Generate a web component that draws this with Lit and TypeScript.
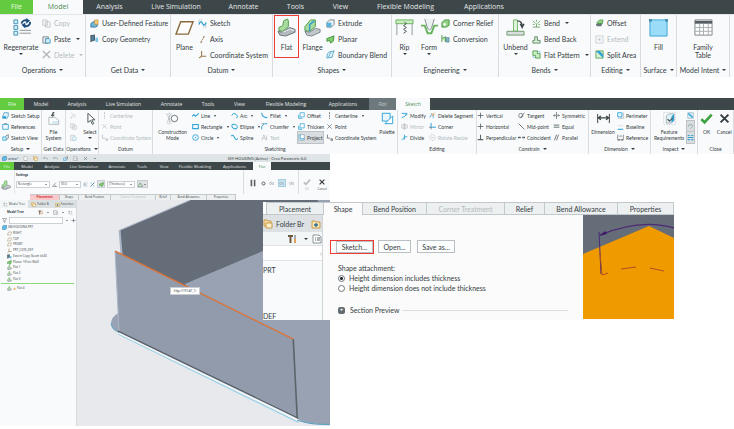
import { LitElement, html, svg, css, nothing, TemplateResult, SVGTemplateResult } from "lit";
import { customElement } from "lit/decorators.js";
import { classMap } from "lit/directives/class-map.js";

/* Small glyphs are drawn on a 10x10 grid, large ones on a 20x20 grid. */
const G = "#5b6468";
const B = "#2fa3d6";
const N = "#67b45a";
const flatPiece = svg`
  <path d="M2 10 L6 8 L7 3 L11 1 L12 3 L12 9 L6 14 L2 13Z" fill="#a9dba0" stroke="#4f9f48"/>
  <path d="M1 14 L6 15 L13 10 L19 12 L19 15 L9 19 L3 18Z" fill="#b4bbbe" stroke="#697276"/>
  <path d="M6 15 L13 12 L18 13" fill="none" stroke="#eef1f2"/>`;
const icons: Record<string, SVGTemplateResult> = {
  regenerate: svg`<g fill="#d9f0fa" stroke="#3f8fb5"><path d="M2 2h4v4h-4zM2 8h4v4h-4zM2 14h4v4h-4z"/></g><path d="M10 6a4 4 0 0 1 6-3M19 4a4 4 0 0 1-6 4" fill="none" stroke="#1f4f7c" stroke-width="2"/><path d="M15 0l4 3-4 3zM14 5l-4 2 4 4z" fill="#1f4f7c"/><path d="M8 13h12M8 16h12" stroke="#8d969a"/>`,
  plane: svg`<path d="M6 4H19L14 17H1Z" fill="#fff" stroke="#8a6a3c" stroke-width="1.5"/>`,
  flat: flatPiece,
  flange: svg`<path d="M2 9 L8 2 L13 2 L13 9 L7 14 L2 13Z" fill="#a9dba0" stroke="#4f9f48"/><path d="M7 14V7L12 3" fill="none" stroke="#2f9fd0" stroke-width="1.5"/><path d="M2 14 L7 15 L13 11 L18 12 L18 15 L9 19 L4 18Z" fill="#c3c9cb" stroke="#7a8387"/>`,
  rip: svg`<path d="M1 2H19V6H1Z" fill="#c9ecc2" stroke="${N}"/><path d="M2 6V18M18 6V18" stroke="#8e979a"/><path d="M10 4l2 2-3 2 3 2-3 2 3 2-3 2" fill="none" stroke="#49545a"/>`,
  form: svg`<path d="M1 8H5L8 16H12L15 8H19" fill="none" stroke="${N}" stroke-width="2"/><path d="M5 1L8 11Q10 14 12 11L15 1" fill="#eef1f2" stroke="#848d91"/>`,
  unbend: svg`<path d="M8 2H12V14H8Z" fill="#e8f6e4" stroke="${N}"/><path d="M1 14H19V18H1Z" fill="#d9dedf" stroke="#6f9a6b"/><path d="M12 3Q17 3 17 9M15 6l2 4 2-4" fill="none" stroke="#3b4448" stroke-width="1.5"/>`,
  fill: svg`<path d="M1 2H19V19H1Z" fill="#9bdcf8" stroke="#3aa4d0"/><path d="M0 1h3v3h-3zM17 1h3v3h-3z" fill="#4b8fb0"/>`,
  table: svg`<path d="M1 2H19V18H1Z" fill="#fff" stroke="#7c8589"/><path d="M1 3H19V6H1Z" fill="#555e62"/><path d="M1 10H19M1 14H19M6 6V18M10 6V18M15 6V18" stroke="#a7aeb1"/>`,
  filesys: svg`<path d="M3 8H12L18 13V19H3Z" fill="#fff" stroke="#8f989b"/><path d="M9 0L6 6h3l-3 5 6-7h-3l3-4z" fill="#4a5459"/><path d="M8 14h9v4h-9z" fill="#cfe8f4"/>`,
  select: svg`<path d="M6 2V16L10 13L13 19L15 18L12 12H17Z" fill="#fff" stroke="#50595d" stroke-width="1.5"/>`,
  construct: svg`<circle cx="13" cy="10" r="5" fill="none" stroke="#6c7579" stroke-width="1.5"/><path d="M1 2L8 18M8 2L1 18M5 1V19" stroke="#9aa2a5" stroke-dasharray="3 1"/>`,
  palette: svg`<path d="M2 2H14V14H2Z" fill="#e9f7fd" stroke="${B}" stroke-width="1.5"/><path d="M18 6V18H6Z" fill="#fff" stroke="${B}" stroke-width="1.5"/>`,
  dimension: svg`<path d="M1 3V17M19 3V17" stroke="#3d4649" stroke-width="1.5"/><path d="M2 9H18M6 6L2 9l4 3M14 6l4 3-4 3" fill="none" stroke="#3d4649" stroke-width="2"/>`,
  feature: svg`<path d="M5 6L9 3H17V13L13 17H5Z" fill="#dff2fa" stroke="#8e979b"/><path d="M13 7L17 3V13L13 17Z" fill="#2fa3d6"/><path d="M1 1H19V19H1Z" fill="none" stroke="#b3babd" stroke-dasharray="2 2"/><path d="M7 11l3 3 5-5" fill="none" stroke="#4e585c" stroke-width="2"/>`,
  ok: svg`<path d="M2 11L7 16L18 4" fill="none" stroke="#3aa23f" stroke-width="4"/>`,
  okGrey: svg`<path d="M2 11L7 16L18 4" fill="none" stroke="#5d6668" stroke-width="4"/>`,
  cancel: svg`<path d="M4 4L16 16M16 4L4 16" stroke="#363e42" stroke-width="3"/>`,

  copy: svg`<path d="M1 1h4l1 1v5h-5zM4 3h4l1 1v5h-5z" fill="#f3f4f5" stroke="#6f787c"/>`,
  paste: svg`<path d="M1 2h6v7h-6z" fill="#e9edef" stroke="#7d868a"/><path d="M4 4h4l1 1v4h-5z" fill="#d3effb" stroke="#3e8fb4"/>`,
  del: svg`<path d="M1 1L9 9M9 1L1 9" stroke="#4a5458" stroke-width="1.5"/>`,
  udf: svg`<path d="M1 5L4 3H8V8L6 9H1Z" fill="#6db7dd" stroke="#39759a"/><path d="M5 1h4v5h-4z" fill="#f1c879" stroke="#b98b38" stroke-width=".6"/>`,
  geom: svg`<path d="M1 1V9M1 2L5 1V7L1 8" fill="#4e7d9b" stroke="#48545a"/><path d="M6 4h3v5h-3z" fill="#7ec7e6"/>`,
  sketch: svg`<path d="M1 1h3v3h-3zM6 6h3v3h-3z" fill="none" stroke="#a3abae" stroke-dasharray="1 1"/><path d="M1 6Q3 1 5 5T9 4" fill="none" stroke="${B}" stroke-width="1.5"/>`,
  axis: svg`<path d="M7 1L3 9" stroke="#9a7a48" stroke-width="1.2" stroke-dasharray="3 1 1 1"/>`,
  csys: svg`<path d="M4 1V7H9M4 7L1 9" fill="none" stroke="#9a7a48" stroke-width="1.2"/>`,
  csysG: svg`<path d="M2 1V6H6M7 7h3v2h-3z" fill="none" stroke="#4e585c"/>`,
  extrude: svg`<path d="M1 4L4 1H9V6L6 9H1Z" fill="#eef7fb" stroke="#6f7a7f"/><path d="M1 4H6V9H1Z" fill="#58b4dd"/>`,
  planar: svg`<path d="M1 4L9 1L8 7L5 9L4 6L1 7Z" fill="#7fd06e" stroke="#3f8d3a"/>`,
  blend: svg`<path d="M1 9Q1 3 4 2L9 1Q7 5 7 8Z" fill="#e4f4fb" stroke="#56a4c6"/><path d="M3 8Q4 4 6 2" fill="none" stroke="#56a4c6"/>`,
  relief: svg`<path d="M1 4L4 1H9V7L6 9H1Z" fill="#8fd383" stroke="#498f43"/><circle cx="4" cy="6" r="1.5" fill="#fff"/>`,
  convert: svg`<path d="M1 1V9M1 5L5 3V9" fill="#b6e2ae" stroke="#4d9a47"/><path d="M6 4h3v5h-3z" fill="#7ab6d2" stroke="#56707c" stroke-width=".6"/>`,
  bend: svg`<path d="M1 9H9M5 9V5M1 2L4 5M9 2L6 5M5 1V3M1 6H3M7 6H9" stroke="#6aa764" fill="none"/>`,
  bendback: svg`<path d="M1 9H9V6H6V2H3V6H1Z" fill="#d5ecd0" stroke="#60866a"/>`,
  pattern: svg`<path d="M1 1H6V4H9V9H4V6H1Z" fill="#c9ecc2" stroke="#54a04e"/><path d="M7 1l2 2M1 7l2 2" stroke="${B}"/>`,
  offset: svg`<path d="M1 6L4 3H9L7 8H2Z" fill="#69737a"/><path d="M2 4L5 1H9L8 5H3Z" fill="#8fd383" stroke="#3f8d3a" stroke-width=".7"/>`,
  extend: svg`<path d="M1 1H9V9H1Z" fill="#f3f4f5" stroke="#8c9599"/><path d="M3 5L6 3V7Z" fill="#7b8488"/>`,
  split: svg`<path d="M1 1H9V9H1Z" fill="#d7f0d1" stroke="#62a35c"/><path d="M1 1L9 9V5L5 1Z" fill="${B}"/>`,

  sheet: svg`<path d="M3 1H9V6L7 9H1V6Z" fill="#dff1f9" stroke="#3e93bb"/><path d="M1 6H6V9H1Z" fill="${B}"/>`,
  refs: svg`<path d="M1 2H9V9H1Z" fill="none" stroke="${B}" stroke-width="1.2"/><path d="M3 1H7" stroke="${G}"/>`,
  view: svg`<path d="M1 4H6V9H1Z" fill="#cbeaf7" stroke="${B}"/><path d="M5 3L9 1V6L6 8" fill="none" stroke="${G}"/>`,
  cut: svg`<path d="M2 1L8 8M8 3L2 7" stroke="#888f93"/><circle cx="2" cy="8" r="1" fill="none" stroke="#888f93"/>`,
  dotline: svg`<path d="M5 0V10" stroke="${G}" stroke-dasharray="3 1"/>`,
  cross: svg`<path d="M2 2L8 8M8 2L2 8" stroke="${G}"/>`,
  line: svg`<path d="M0 6L3 4L5 6L10 2" fill="none" stroke="${B}" stroke-width="1.5"/>`,
  rect: svg`<path d="M1 2H9V8H1Z" fill="#f3fbff" stroke="${B}" stroke-width="1.5"/>`,
  circle: svg`<circle cx="5" cy="5" r="4" fill="none" stroke="${B}" stroke-width="1.3"/><circle cx="5" cy="5" r="1" fill="${B}"/>`,
  dot: svg`<circle cx="5" cy="5" r="3" fill="none" stroke="${G}" stroke-width="2"/>`,
  arc: svg`<path d="M1 5Q3 0 7 3T8 9" fill="none" stroke="${B}" stroke-width="1.4"/>`,
  ellipse: svg`<ellipse cx="5" cy="5" rx="4" ry="3" fill="none" stroke="${B}" stroke-width="1.3" transform="rotate(30 5 5)"/>`,
  spline: svg`<path d="M0 3Q3 0 5 5T10 6" fill="none" stroke="${B}" stroke-width="1.5"/>`,
  fillet: svg`<path d="M1 1Q1 8 9 8" fill="none" stroke="${B}" stroke-width="1.5"/>`,
  chamfer: svg`<path d="M1 9V5L5 1H9" fill="none" stroke="${B}" stroke-width="1.4"/><path d="M1 1h3" stroke="${G}"/>`,
  text: svg`<path d="M1 9L4 1L7 9M2 6H6M8 2V9" fill="none" stroke="${G}"/>`,
  offs: svg`<path d="M3 1H9V7H3Z" fill="none" stroke="${B}"/><path d="M1 4V9H6" fill="none" stroke="${B}" stroke-width="1.3"/>`,
  project: svg`<path d="M1 1H9V9H1Z" fill="#fff" stroke="#8ea5b1"/><path d="M3 1V7H9" fill="none" stroke="${B}" stroke-width="1.4"/>`,
  modify: svg`<path d="M1 2H9M6 4H9M1 8Q5 8 8 3" fill="none" stroke="${B}" stroke-width="1.3"/>`,
  mirror: svg`<path d="M5 0V10M1 3L4 2V8L1 7ZM9 3L6 2V8L9 7Z" fill="none" stroke="${G}"/>`,
  divide: svg`<path d="M1 8Q4 8 5 4H9M5 1V8" fill="none" stroke="${B}" stroke-width="1.2"/>`,
  delseg: svg`<path d="M1 8L4 2M6 9V5" stroke="${B}"/><path d="M3 2L8 5M8 1L4 6" stroke="#d38a35"/>`,
  corner: svg`<path d="M3 0V6H10" fill="none" stroke="${B}" stroke-width="1.4"/><path d="M0 6H3V9" fill="none" stroke="${G}"/>`,
  rotate: svg`<circle cx="5" cy="5" r="4" fill="none" stroke="${G}" stroke-dasharray="3 1"/><path d="M3 5H7" stroke="${G}"/>`,
  plus: svg`<path d="M5 1V9M1 5H9" stroke="${G}" stroke-width="1.2"/>`,
  perp: svg`<path d="M5 1V8M1 8H9" stroke="${G}" stroke-width="1.5"/>`,
  tangent: svg`<circle cx="4" cy="5" r="3" fill="none" stroke="${G}"/><path d="M3 9L9 1" stroke="${G}"/>`,
  mid: svg`<path d="M1 1L9 9" stroke="${G}" stroke-width="1.2"/>`,
  coin: svg`<path d="M0 5H4M6 5H10" stroke="${G}" stroke-width="1.8"/>`,
  symm: svg`<path d="M5 0V10M0 5H3M7 5H10M2 3L4 5L2 7M8 3L6 5L8 7" fill="none" stroke="${G}"/>`,
  equal: svg`<path d="M1 3H9M1 6H9" stroke="${G}" stroke-width="1.3"/>`,
  parallel: svg`<path d="M2 9L5 1M5 9L8 1" stroke="${G}" stroke-width="1.2"/>`,
  perim: svg`<path d="M1 1H7V7H1Z" fill="#e4f6fd" stroke="${B}" stroke-width="1.2"/><path d="M9 1V9H1" fill="none" stroke="${G}" stroke-dasharray="1 1"/>`,
  base: svg`<path d="M1 9H9" stroke="${B}" stroke-width="1.5"/><path d="M1 4H9" stroke="#d5dadc"/>`,
  refdim: svg`<path d="M1 1V8H9V1M3 3H7M1 9H4M6 9H9" fill="none" stroke="${G}"/>`,
  inspA: svg`<path d="M1 1H9V9H1Z" fill="#d9eef7" stroke="#9fb5bf"/><path d="M2 2L8 8" stroke="${B}" stroke-width="2"/>`,
  inspB: svg`<path d="M2 5Q2 2 5 2T8 5L5 8" fill="none" stroke="#7d96a3"/>`,
  inspC: svg`<path d="M1 2H4M6 2H9M1 5H9M1 8H4M6 8H9" stroke="${B}" stroke-width="1.5"/>`,

  logo: svg`<path d="M1 3L3 1H9V7L7 9H1Z" fill="#5fbbe4" stroke="#2a7fae"/>`,
  datum: svg`<path d="M3 2H9L7 8H1Z" fill="#fff" stroke="#a38a62"/>`,
  angle: svg`<path d="M1 9H10M1 9L8 1M5 5Q7 6 7 9" fill="none" stroke="${G}"/>`,
  bracket: svg`<path d="M9 2H2V8H9M2 5H7" fill="none" stroke="#7e9aa8"/>`,
  slash: svg`<path d="M1 9L9 1" stroke="#37678a" stroke-width="1.5"/><path d="M1 2h3M6 8h3" stroke="${B}"/>`,
  funnel: svg`<path d="M1 1H9L6 5V9L4 8V5Z" fill="#fff" stroke="${G}"/>`,
  folder: svg`<path d="M1 1H4L5 2H8V7H1Z" fill="#f8dfa5" stroke="#c79b49"/><path d="M3 4H9V9H3Z" fill="#fdf0cc" stroke="#c79b49"/>`,
  favorite: svg`<path d="M1 2H4L5 3H9V9H1Z" fill="#fbe7b4" stroke="#c79b49"/><path d="M5 4V8M3 6H7" stroke="#2b6b99" stroke-width="1.3"/>`,
  tools: svg`<path d="M1 1H6V3H4.500V9H2.500V3H1Z" fill="#6f5a44"/><path d="M8 1V5" stroke="${G}"/><path d="M8 5V9" stroke="#e08a2b" stroke-width="1.6"/>`,
  list: svg`<path d="M1 1H7L9 3V9H1Z" fill="#fff" stroke="#8b9498"/><path d="M3 4H4M5 4H8M3 6H4M5 6H8" stroke="${G}"/>`,
  tree: svg`<path d="M2 1V8M2 3H5M2 8H5M7 2V5M6 8H9" stroke="#879094" fill="none"/>`,
  pause: svg`<path d="M2 1H4V9H2ZM6 1H8V9H6Z" fill="#5a6266"/>`,
  glasses: svg`<circle cx="3" cy="5" r="2" fill="none" stroke="#8c9599"/><circle cx="8" cy="5" r="2" fill="none" stroke="#8c9599"/><path d="M3 3L5 1" stroke="#8c9599"/>`,
  newdoc: svg`<path d="M2 1H6L8 3V9H2Z" fill="#fff" stroke="#8f989b"/>`,
  undo: svg`<path d="M1 4H7Q9 4 9 7M3 2L1 4L3 6" fill="none" stroke="#7d868a"/>`,
  partial: svg`<g transform="scale(.5)">${flatPiece}</g>`,
  partialWarn: svg`<path d="M5 1L9 8H1Z" fill="#ee9a22"/>`,
};
const BIG = new Set(["regenerate", "plane", "flat", "flange", "rip", "form", "unbend", "fill", "table", "filesys", "select", "construct", "palette", "dimension", "feature", "ok", "okGrey", "cancel"]);
const icon = (name: string, cls = "") =>
  html`<svg class="ico ${cls}" viewBox=${BIG.has(name) ? "0 0 20 20" : "0 0 10 10"} aria-hidden="true">${icons[name]}</svg>`;
const caret = html`<i class="caret"></i>`;

/* "▾" after a label adds the menu arrow, "!" before it greys it out, "#" marks it pressed. */
type Item = [string, string];
const item = ([ic, raw]: Item) => {
  const off = raw.startsWith("!");
  const on = raw.startsWith("#");
  const menu = raw.endsWith("▾");
  const text = raw.replace(/^[!#]|▾$/g, "");
  return html`<button class=${classMap({ item: true, off, on })} ?disabled=${off} aria-label=${text || ic}>
    ${icon(ic)}${text ? html`<span>${text}</span>` : nothing}${menu ? caret : nothing}</button>`;
};
const col = (...items: Item[]) => html`<div class="col">${items.map(item)}</div>`;
const big = (ic: string, lines: string[], menu = false, marked = false) => html`
  <button class=${classMap({ big: true, marked })}>${icon(ic)}
    ${lines.map((l) => html`<span>${l}</span>`)}${menu ? caret : nothing}</button>`;
const group = (cls: string, title: string, body: TemplateResult) => html`
  <section class="group">
    <div class="body ${cls}">${body}</div>
    <div class="title">${title.replace("▾", "")}${title.endsWith("▾") ? caret : nothing}</div>
  </section>`;
const TABS = ["File", "Model", "Analysis", "Live Simulation", "Annotate", "Tools", "View", "Flexible Modeling", "Applications"];
const tabs = (active: string, extra: string[] = []) => html`
  <nav class="tabs">${[...TABS, ...extra].map((t) => html`
    <button class=${classMap({ file: t === "File", active: t === active, context: t === "Flat" && t !== active })}>${t}</button>`)}</nav>`;
const PANES = ["Placement", "Shape", "Bend Position", "Corner Treatment", "Relief", "Bend Allowance", "Properties"];
const panes = (active: string) => html`
  <nav class="panes">${PANES.map((t) => html`
    <button class=${classMap({ active: t === active, off: t === "Corner Treatment" })}>${t}</button>`)}</nav>`;
const TREE: Item[] = [
  ["logo", "SM-HOUSING.PRT"], ["datum", "RIGHT"], ["datum", "TOP"], ["datum", "FRONT"], ["csys", "PRT_CSYS_DEF"],
  ["geom", "Extern Copy Geom id 40"], ["planar", "Planar 1(First Wall)"], ["partial", "Flat 1"], ["partial", "Flat 2"], ["partial", "Flat 3"],
];

@customElement("app-root")
export class AppRoot extends LitElement {
  static styles = css`
    :host { display: block; background: #fff; color: #353d41; font-family: Lato, "Open Sans", sans-serif; overflow: hidden; }
    * { box-sizing: border-box; }
    button, input, select { font: inherit; color: inherit; padding: 0; margin: 0; border: 0; background: none; border-radius: 0; appearance: none; outline: none; min-width: 0; }
    button { white-space: nowrap; }
    svg { display: block; flex: none; }
    .ico { width: var(--ico); height: var(--ico); }
    .caret { flex: none; width: 0; height: 0; border: 2px solid transparent; border-top-color: currentColor; border-bottom: 0; margin-left: 3px; }
    .off { color: #b4babd; }
    .off .ico { opacity: .4; }

    .tabs { display: grid; background: #3d4649; color: #e3e7e8; font-family: "Open Sans", "Noto Sans", sans-serif; }
    .tabs .file { background: #62cb3f; color: #e9fbe3; }
    .tabs .active { background: #f8fafc; color: #4c8a4d; }
    .tabs .context { background: #6d787c; color: #c3cbce; font-style: italic; }
    .groups { display: grid; background: #f8fafc; }
    .group { border-right: 1px solid #d8dcdf; min-width: 0; }
    .body { display: grid; }
    .col { display: grid; grid-auto-rows: var(--row); align-content: start; justify-items: start; }
    .item { display: flex; align-items: center; gap: 2px; }
    .item .caret { margin-left: 2px; }
    .big { display: flex; flex-direction: column; align-items: center; align-self: start; }
    .big .ico { width: var(--bigico); height: var(--bigico); margin-bottom: var(--drop); }
    .big .caret { margin: 2px 0 0; }
    .title { display: flex; align-items: center; justify-content: center; white-space: nowrap; }

    .main { --ico: 9px; --bigico: 19px; --row: 16px; --drop: 6px; font-size: 7px; line-height: 8px; }
    .main .tabs { grid-template-columns: 33px 50px 53px 80px 55px 49px 41px 89px 68px; height: 14px; }
    .main .groups { grid-template-columns: 86fr 85fr 102fr 119fr 107fr 92fr 50fr 36fr 53fr 4fr; border-top: 1px solid #e2e6e8; }
    .main .body { height: 47px; }
    .main .title { height: 15px; }
    .main .big { padding-top: 3px; height: 43px; }
    .main .item { gap: 3px; }
    .main .col .item:last-child { height: 15px; }
    .marked { box-shadow: inset 0 0 0 1px #ee3b36; }
    .m-ops { grid-template-columns: 42px 1fr; }
    .m-data { grid-template-columns: 1fr; padding-left: 4px; }
    .m-datum { grid-template-columns: 27px 1fr; }
    .m-shapes { grid-template-columns: 25px 27px 1fr; padding-left: 1px; }
    .m-eng { grid-template-columns: 25px 24px 1fr; }
    .m-bends { grid-template-columns: 33px 1fr; }
    .m-edit { grid-template-columns: 1fr; padding-left: 4px; }

    .sketcher { --ico: 7px; --bigico: 13px; --row: 11px; --drop: 4px; font-size: 5px; line-height: 6px; margin-top: 21px; }
    .sketcher .tabs { grid-template-columns: 24px 34px 38px 55px 41px 32px 31px 62px 52px 27px 34px; height: 12px; }
    .sketcher .groups { grid-template-columns: 42fr 24fr 33fr 54fr 245fr 79fr 112fr 62fr 47fr 36fr; }
    .sketcher .body { height: 33px; }
    .sketcher .title { height: 11px; }
    .sketcher .big { padding-top: 2px; }
    .sketcher .item .caret { border-width: 1px; border-top-width: 2px; }
    .sketcher .on { background: #d9dddf; box-shadow: 0 0 0 1px #bcc2c5; }
    .s-setup { padding-left: 2px; }
    .s-ops { grid-template-columns: 12px 1fr; padding-left: 4px; }
    .s-datum { padding-left: 2px; }
    .s-sketch { grid-template-columns: 39px 39px 30px 37px 28px 52px 18px; }
    .s-edit { grid-template-columns: 28px 1fr; padding-left: 3px; }
    .s-con { grid-template-columns: 41px 35px 1fr; }
    .s-dim { grid-template-columns: 28px 1fr; }
    .s-insp { grid-template-columns: 36px 9px; }
    .s-close { grid-template-columns: 1fr 1fr; }

    .stage { position: relative; }
    .window { width: 45%; --ico: 5px; font: 3px/5px "Open Sans", "Noto Sans", sans-serif; background: #f8fafc; }
    .caption { display: flex; align-items: center; height: 8px; background: #dfe4e6; padding: 0 24px 0 2px; gap: 5px; }
    .brand { display: flex; align-items: center; gap: 1px; font-size: 4px; font-weight: 700; color: #5d7c8c; }
    .caption .name { margin-left: auto; font: 4px/5px Lato, sans-serif; }
    .window .tabs { grid-template-columns: 14px 26px 24px 40px 26px 24px 20px 42px 37px 18px; height: 8px; font-size: 4px; }
    .dash { display: grid; grid-template-columns: 14px 1fr 55px 32px; height: 24px; }
    .dash > .lead { --ico: 10px; padding: 10px 0 0 1px; }
    .settings { border-left: 1px solid #e4e7e9; padding-left: 1px; }
    .settings b { display: block; height: 10px; line-height: 10px; }
    .fields { display: flex; align-items: center; gap: 2px; }
    .fields label { display: flex; align-items: center; border: 1px solid #ccd1d4; background: #fff; height: 7px; width: 34px; padding: 0 1px; }
    .fields label.mid { width: 28px; }
    .fields label.short { width: 22px; }
    .fields label input, .fields label select { flex: 1; width: 10px; height: 5px; line-height: 5px; }
    .window .caret { border-width: 1px; border-top-width: 1px; margin: 0 1px; }
    .tool { display: flex; align-items: center; justify-content: center; height: 8px; min-width: 8px; background: #dfe3e4; border: 1px solid #c5cbce; }
    .tool.blue { background: #c9e6f2; border-color: #a4cddd; }
    .modes { border-left: 1px solid #d8dcdf; display: flex; align-items: center; justify-content: space-between; padding: 2px 4px 0 5px; }
    .modes .first { --ico: 8px; }
    .done { border-left: 1px solid #d8dcdf; display: flex; justify-content: space-around; padding-top: 8px; --bigico: 8px; --drop: 1px; }
    .window .panes { padding-left: 30px; grid-template-columns: 30px 19px 32px 45px 15px 36px 29px; height: 6px; }
    .panes { display: grid; }
    .panes button { background: #edf0f1; border: solid #c3c8cb; border-width: 1px 1px 0 0; }
    .window .panes .active { background: #f9c9cb; color: #d23338; font-weight: 700; }
    .work { display: grid; grid-template-columns: 77px 1fr; height: 226px; }
    .side { border-right: 1px solid #d5dadd; }
    .sidetabs { display: grid; grid-template-columns: 28px 24px 24px; background: #dbe0e2; height: 8px; }
    .sidetabs button { display: flex; align-items: center; justify-content: center; gap: 1px; }
    .sidetabs .active { background: #f3f6f7; }
    .sidehead { display: flex; align-items: center; gap: 3px; height: 9px; padding: 0 3px 0 7px; }
    .sidehead b { flex: 1; }
    .find { display: flex; align-items: center; gap: 2px; height: 7px; padding-left: 2px; margin-bottom: 1px; }
    .find input { width: 54px; height: 7px; border: 1px solid #ccd1d4; background: #fff; }
    ul { list-style: none; margin: 0; padding: 0; display: grid; grid-auto-rows: 1fr; height: 57px; }
    li { display: flex; align-items: center; gap: 1px; padding-left: 7px; white-space: nowrap; }
    li:first-child { padding-left: 2px; }
    .insert { height: 1px; margin: 1px 2px 2px 1px; background: #8fd67c; }
    .last { display: flex; align-items: center; gap: 1px; padding-left: 7px; }
    .last .warn { width: 3px; height: 3px; }
    .view { position: relative; overflow: hidden; background: #e8e9ed; }
    .view svg { width: 100%; height: 226px; }
    .tip { position: absolute; left: 93px; top: 87px; width: 30px; height: 8px; background: #fff; border: 1px solid #c8ccd0; text-align: center; line-height: 6px; white-space: nowrap; }

    .panel { position: absolute; left: 263px; right: 60px; top: 48px; font-size: 7px; line-height: 8px; background: #fbfbfc; }
    .panel .panes { grid-template-columns: 58fr 39fr 64fr 78fr 40fr 73fr 56fr; padding-left: 3px; height: 13px; background: #fff; border-bottom: 1px solid #c3c8cb; }
    .panel .panes button:first-child { border-left-width: 1px; }
    .panel .panes .active { background: #fbfbfc; margin-bottom: -1px; }
    .content { display: grid; grid-template-columns: 60px 1fr 91px; height: 105px; }
    .strip { display: flex; flex-direction: column; background: #f8fafc; border-right: 1px solid #d0d5d8; white-space: nowrap; --ico: 10px; }
    .strip .row { display: flex; align-items: center; gap: 3px; height: 17px; background: #dde1e4; }
    .strip .row span { width: 32px; }
    .strip .bar { height: 13px; background: #f3f6f7; justify-content: flex-end; gap: 4px; }
    .strip .search { height: 16px; background: #fff; border: solid #dfe3e5; border-width: 1px 0; justify-content: flex-end; color: #92999d; }
    .strip p { margin: 5px 0 0; }
    .strip p.end { margin: auto 0 0; }
    .shape { padding: 25px 15px 0 7px; }
    .buttons { display: flex; gap: 4px; height: 14px; }
    .frame { border: 1px solid #ee3b36; padding-left: 5px; width: 44px; display: flex; }
    .frame button, .plain { border: 1px solid #b9bfc2; background: #fcfdfd; flex: 1; }
    .plain { flex: none; width: 33px; height: 13px; }
    .plain.wide { width: 38px; margin-left: 2px; }
    fieldset { border: 0; margin: 10px 0 0; padding: 0 0 0 8px; min-width: 0; }
    legend { padding: 0; margin-bottom: 1px; }
    fieldset label { display: flex; align-items: center; gap: 4px; height: 10px; }
    fieldset input { width: 7px; height: 7px; border: 1px solid #6d7579; border-radius: 50%; background: #fff; }
    fieldset input:checked { background: radial-gradient(circle, #22282b 0 1px, #fff 2px); }
    .preview { display: flex; align-items: center; gap: 3px; margin-top: 13px; padding-left: 8px; }
    .preview button { display: flex; align-items: center; gap: 5px; }
    .preview i { width: 7px; height: 7px; border-radius: 2px; background: #646c70; color: #fff; font: 700 6px/6px "Open Sans", sans-serif; text-align: center; }
    .preview hr { flex: 1; border: 0; border-top: 1px solid #dcdfe1; margin: 0; }
    .photo { width: 100%; height: 104px; }
  `;

  render() {
    return html`
      <header class="main">
        ${tabs("Model")}
        <div class="groups">
          ${group("m-ops", "Operations▾", html`${big("regenerate", ["Regenerate"], true)}${col(["copy", "!Copy"], ["paste", "Paste▾"], ["del", "!Delete▾"])}`)}
          ${group("m-data", "Get Data▾", col(["udf", "User-Defined Feature"], ["geom", "Copy Geometry"]))}
          ${group("m-datum", "Datum▾", html`${big("plane", ["Plane"])}${col(["sketch", "Sketch"], ["axis", "Axis"], ["csys", "Coordinate System"])}`)}
          ${group("m-shapes", "Shapes▾", html`${big("flat", ["Flat"], false, true)}${big("flange", ["Flange"])}${col(["extrude", "Extrude"], ["planar", "Planar"], ["blend", "Boundary Blend"])}`)}
          ${group("m-eng", "Engineering▾", html`${big("rip", ["Rip"], true)}${big("form", ["Form"], true)}${col(["relief", "Corner Relief"], ["convert", "Conversion"])}`)}
          ${group("m-bends", "Bends▾", html`${big("unbend", ["Unbend"], true)}${col(["bend", "Bend▾"], ["bendback", "Bend Back"], ["pattern", "Flat Pattern▾"])}`)}
          ${group("m-edit", "Editing▾", col(["offset", "Offset"], ["extend", "!Extend"], ["split", "Split Area"]))}
          ${group("", "Surface▾", big("fill", ["Fill"]))}
          ${group("", "Model Intent▾", big("table", ["Family", "Table"]))}
        </div>
      </header>

      <section class="sketcher">
        ${tabs("Sketch", ["Flat", "Sketch"])}
        <div class="groups">
          ${group("s-setup", "Setup▾", col(["sheet", "Sketch Setup"], ["refs", "References"], ["view", "Sketch View"]))}
          ${group("", "Get Data", big("filesys", ["File", "System"]))}
          ${group("s-ops", "Operations▾", html`${col(["cut", "!"], ["copy", "!"], ["paste", "!"])}${big("select", ["Select"], true)}`)}
          ${group("s-datum", "Datum", col(["dotline", "!Centerline"], ["cross", "!Point"], ["csysG", "!Coordinate System"]))}
          ${group("s-sketch", "Sketching", html`${big("construct", ["Construction", "Mode"])}
            ${col(["line", "Line▾"], ["rect", "Rectangle▾"], ["circle", "Circle▾"])}
            ${col(["arc", "Arc▾"], ["ellipse", "Ellipse▾"], ["spline", "Spline"])}
            ${col(["fillet", "Fillet▾"], ["chamfer", "Chamfer▾"], ["text", "!Text"])}
            ${col(["offs", "Offset"], ["offs", "Thicken"], ["project", "#Project"])}
            ${col(["dotline", "Centerline▾"], ["cross", "Point"], ["csysG", "Coordinate System"])}
            ${big("palette", ["Palette"])}`)}
          ${group("s-edit", "Editing", html`${col(["modify", "Modify"], ["mirror", "!Mirror"], ["divide", "Divide"])}${col(["delseg", "Delete Segment"], ["corner", "Corner"], ["rotate", "!Rotate Resize"])}`)}
          ${group("s-con", "Constrain▾", html`${col(["plus", "Vertical"], ["plus", "Horizontal"], ["perp", "Perpendicular"])}
            ${col(["tangent", "Tangent"], ["mid", "Mid-point"], ["coin", "Coincident"])}${col(["symm", "Symmetric"], ["equal", "Equal"], ["parallel", "Parallel"])}`)}
          ${group("s-dim", "Dimension▾", html`${big("dimension", ["Dimension"])}${col(["perim", "Perimeter"], ["base", "Baseline"], ["refdim", "Reference"])}`)}
          ${group("s-insp", "Inspect▾", html`${big("feature", ["Feature", "Requirements"])}${col(["inspA", ""], ["inspB", "#"], ["inspC", "#"])}`)}
          ${group("s-close", "Close", html`${big("ok", ["OK"])}${big("cancel", ["Cancel"])}`)}
        </div>
      </section>

      <main class="stage">
        <div class="window">
          <div class="caption">
            <span class="brand">${icon("logo")}creo°</span>
            ${["newdoc", "folder", "undo", "undo", "view", "list", "cross"].map((n) => icon(n))}${caret}
            <span class="name">SM-HOUSING (Active) - Creo Parametric 6.0</span>
          </div>
          ${tabs("Flat", ["Flat"])}
          <div class="dash">
            <div class="lead">${icon("partial")}</div>
            <div class="settings">
              <b>Settings</b>
              <div class="fields">
                <label><select aria-label="Profile"><option>Rectangle</option></select>${caret}</label>
                ${icon("angle")}
                <label class="short"><input aria-label="Angle" value="90.0">${caret}</label>
                ${icon("bracket")}${icon("slash")}
                <button class="tool" aria-label="Thickness side">${icon("planar")}</button>
                <label class="mid"><select aria-label="Radius"><option>[Thickness]</option></select>${caret}</label>
                <button class="tool" aria-label="Radius side">${icon("bendback")}${caret}</button>
              </div>
            </div>
            <div class="modes">
              <span class="first">${icon("pause")}</span>${icon("dot")}${icon("glasses")}
              <button class="tool blue" aria-label="Attached preview">${icon("glasses")}</button>${icon("glasses")}
            </div>
            <div class="done"><button class="big off">${icon("okGrey")}<span>OK</span></button>${big("cancel", ["Cancel"])}</div>
          </div>
          ${panes("Placement")}
          <div class="work">
            <aside class="side">
              <nav class="sidetabs">
                <button class="active">${icon("tree")}Model Tree</button>
                <button>${icon("folder")}Folder B</button>
                <button>${icon("favorite")}Favorites</button>
              </nav>
              <div class="sidehead"><b>Model Tree</b>${icon("tools")}${caret}${icon("list")}${caret}${icon("tree")}</div>
              <div class="find">${icon("funnel")}<input aria-label="Search model tree">${caret}${icon("plus")}</div>
              <ul>${TREE.map(([ic, t]) => html`<li>${icon(ic)}${t}</li>`)}</ul>
              <div class="insert"></div>
              <div class="last">${icon("partial")}${icon("partialWarn", "warn")}Flat 4</div>
            </aside>
            <div class="view">
              <svg viewBox="77 200 253 226" preserveAspectRatio="xMinYMin slice" role="img" aria-label="Sheet metal housing">
                <path d="M118 313Q111 317 111 323Q112 330 119 332L130 330V310Z" fill="#98a3b5"/>
                <path d="M111 323Q112 330 119 332" fill="none" stroke="#6fa9c4"/>
                <path d="M120 230L190 200H332V424Q310 425 297 419L293 339L121 254Z" fill="#98a2b2"/>
                <path d="M120 230L190 200H317L332 222L185 284L185 287L121 255Z" fill="#656d79"/>
                <path d="M120 230L190 200" stroke="#b9c3d2"/>
                <path d="M119.500 230L121.500 254" stroke="#a9b5c6" stroke-width="2"/>
                <path d="M185 284L263 251L332 222V300H215Z" fill="#98a2b2"/>
                <path d="M115 251L293 339L297 418L119 331Z" fill="#919bab"/>
                <path d="M115 251L119 331" stroke="#aab6c8"/>
                <path d="M118 334L298 422" stroke="#8fd0e8"/>
                <path d="M119 333L298 420" stroke="#f3f4f6" stroke-width="1.500"/>
                <path d="M118 331L298 418" stroke="#565f69" stroke-width="1.300"/>
                <path d="M297 420Q312 425 331 424" fill="none" stroke="#5da2c0" stroke-width="1.200"/>
                <path d="M293 339L297 418" stroke="#59646b" stroke-width="1.600"/>
                <path d="M115 251L293 339" stroke="#d9733a" stroke-width="1.400"/>
              </svg>
              <span class="tip">Edge:F7(FLAT_1)</span>
            </div>
          </div>
        </div>

        <section class="panel">
          ${panes("Shape")}
          <div class="content">
            <div class="strip">
              <div class="row">${icon("folder")}<span>Folder Br</span>${icon("favorite")}</div>
              <div class="row bar">${icon("tools")}${caret}${icon("list")}</div>
              <div class="row search">›</div>
              <p>PRT</p>
              <p class="end">DEF</p>
            </div>
            <div class="shape">
              <div class="buttons">
                <div class="frame"><button>Sketch...</button></div>
                <button class="plain">Open...</button>
                <button class="plain wide">Save as...</button>
              </div>
              <fieldset>
                <legend>Shape attachment:</legend>
                <label><input type="radio" name="attach" checked>Height dimension includes thickness</label>
                <label><input type="radio" name="attach">Height dimension does not include thickness</label>
              </fieldset>
              <div class="preview"><button><i>+</i>Section Preview</button><hr></div>
            </div>
            <svg class="photo" viewBox="0 0 91 104" preserveAspectRatio="none" role="img" aria-label="Wall angle preview">
              <path d="M0 0H91V104H0Z" fill="#656d79"/>
              <path d="M0 39L66 11L91 23V104H0Z" fill="#ef9b00"/>
              <path d="M17 20Q58 3 91 13" fill="none" stroke="#4d2a74" stroke-width="1.200"/>
              <path d="M16 17L18 59" stroke="#4d2a74"/>
              <path d="M16 21L22 16L24 19Z" fill="#3c1c66"/>
              <path d="M17 38L19 60L25 58M38 54L53 52M67 53L81 56" fill="none" stroke="#b04f22"/>
            </svg>
          </div>
        </section>
      </main>
    `;
  }
}
